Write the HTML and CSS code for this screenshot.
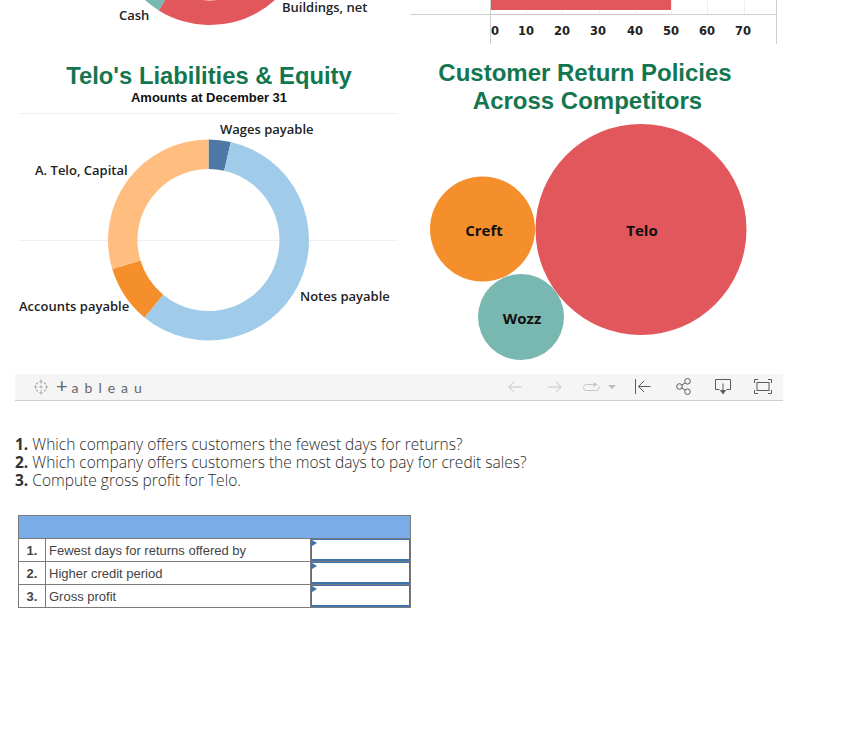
FILE: index.html
```html
<!DOCTYPE html>
<html lang="en">
<head>
<meta charset="utf-8">
<title>Telo dashboard</title>
<link rel="stylesheet" href="styles.css">
</head>
<body>
<main class="page">
  <section class="strip">
    <svg class="strip-left" viewBox="0 0 410 45" aria-label="Telo's assets donut">
      <path class="c-teal" d="M158.8 10.4A97 97 0 0 1 113 -72L137.6 -72A72.4 72.4 0 0 0 171.8 -10.500Z"/>
      <path class="c-red" d="M307 -72A97 97 0 0 1 158.8 10.4L171.8 -10.500A72.4 72.4 0 0 0 282.4 -72Z"/>
      <text class="label" x="119" y="20">Cash</text>
      <text class="label" x="282" y="12">Buildings, net</text>
    </svg>
    <svg class="strip-right" viewBox="410 0 452 45" aria-label="Bar chart axis">
      <g class="grid-faint">
        <path d="M526.5 0V14M562.5 0V14M599.5 0V14M635.5 0V14M671.5 0V14M707.5 0V14M744.5 0V14"/>
      </g>
      <rect class="c-red" x="491" y="0" width="180" height="10"/>
      <path class="axis" d="M410 14.5H777M490.5 0V44M776.5 0V44"/>
      <g class="tick">
        <text x="495" y="35">0</text>
        <text x="526" y="35">10</text>
        <text x="562" y="35">20</text>
        <text x="598" y="35">30</text>
        <text x="635" y="35">40</text>
        <text x="671" y="35">50</text>
        <text x="707" y="35">60</text>
        <text x="743" y="35">70</text>
      </g>
    </svg>
  </section>

  <section class="charts">
    <div class="panel panel-left">
      <h2 class="title">Telo's Liabilities &amp; Equity</h2>
      <p class="subtitle">Amounts at December 31</p>
      <svg class="donut" viewBox="0 113 418 261" aria-label="Liabilities and equity donut">
        <path class="rule" d="M19 113.5H398M19 240.5H398"/>
        <path class="c-blue" d="M208.5 139.5A100.5 100.5 0 0 1 230.8 142L224.2 170.8A71 71 0 0 0 208.5 169Z"/>
        <path class="c-lblue" d="M230.8 142A100.5 100.5 0 1 1 144.4 317.4L163.2 294.7A71 71 0 1 0 224.2 170.8Z"/>
        <path class="c-orange" d="M144.4 317.4A100.5 100.5 0 0 1 112.3 269L140.5 260.5A71 71 0 0 0 163.2 294.7Z"/>
        <path class="c-lorange" d="M112.3 269A100.5 100.5 0 0 1 208.5 139.5L208.5 169A71 71 0 0 0 140.5 260.5Z"/>
        <text class="label" x="220" y="134">Wages payable</text>
        <text class="label" x="35" y="175">A. Telo, Capital</text>
        <text class="label" x="19" y="311">Accounts payable</text>
        <text class="label" x="300" y="301">Notes payable</text>
      </svg>
    </div>
    <div class="panel panel-right">
      <h2 class="title title-tall">Customer Return Policies<br><span class="title-second">Across Competitors</span></h2>
      <svg class="bubbles" viewBox="418 115 344 259" aria-label="Return policies bubble chart">
        <circle class="c-red" cx="641" cy="229.5" r="105.5"/>
        <circle class="c-orange" cx="482.5" cy="229" r="52.5"/>
        <circle class="c-teal" cx="521" cy="317" r="43"/>
        <text class="bubble-label" x="484" y="235.500">Creft</text>
        <text class="bubble-label" x="642" y="235.500">Telo</text>
        <text class="bubble-label" x="522" y="323.500">Wozz</text>
      </svg>
    </div>
  </section>

  <div class="toolbar">
    <div class="brand">
      <svg class="brand-mark" viewBox="0 0 16 16" aria-hidden="true">
        <path d="M8 0V5M6.200 2.500H9.800M8 11V16M6.200 13.500H9.800M2.500 6V10M.8 8H4.200M13.500 6V10M11.800 8H15.200M4 3.500V5.500M3 4.500H5M12 3.500V5.500M11 4.500H13M4 10.500V12.500M3 11.500H5M12 10.500V12.500M11 11.500H13M8 6.200V9.800M6.200 8H9.800"/>
      </svg>
      <span class="wordmark"><span class="wordmark-plus">+</span>ableau</span>
    </div>
    <div class="tools">
      <span class="tool"><svg class="ico ico-off" width="14" height="12" viewBox="0 0 14 12"><path d="M13.500 6H1M6 .800L.8 6L6 11.200"/></svg></span>
      <span class="tool"><svg class="ico ico-off" width="14" height="12" viewBox="0 0 14 12"><path d="M.5 6H13M8 .800L13.200 6L8 11.200"/></svg></span>
      <span class="tool tool-wide">
        <svg class="ico ico-off redo" width="17" height="9" viewBox="0 0 17 9"><path d="M10 2.500H3.500A2.500 2.500 0 0 0 3.500 8.500H13.500A2.500 2.500 0 0 0 16 6V4.500"/><path class="solid" d="M10.500 0V5L14.500 2.500Z"/></svg>
        <span class="caret"></span>
      </span>
      <span class="tool"><svg class="ico" width="16" height="15" viewBox="0 0 16 15"><path d="M.5 0V15M15.500 7.500H3.500M9 2L3.500 7.500L9 13"/></svg></span>
      <span class="tool"><svg class="ico" width="15" height="17" viewBox="0 0 15 17"><circle cx="3.500" cy="8.500" r="2.800"/><circle cx="11.500" cy="3.300" r="2.800"/><circle cx="11.500" cy="13.700" r="2.800"/><path d="M5.900 7L9.100 4.900M5.900 10L9.100 12.100"/></svg></span>
      <span class="tool"><svg class="ico" width="16" height="16" viewBox="0 0 16 16"><path d="M4.500 10.500H.5V.5H15.500V10.500H11.500M8 4.500V12"/><path class="solid" d="M4.800 11H11.200L8 15.500Z"/></svg></span>
      <span class="tool"><svg class="ico" width="18" height="15" viewBox="0 0 18 15"><path d="M.5 4V.5H4M14 .5H17.500V4M.5 11V14.500H4M14 14.500H17.500V11"/><rect x="3" y="3.500" width="12" height="8"/></svg></span>
    </div>
  </div>

  <ol class="questions">
    <li><b>1.</b> Which company offers customers the fewest days for returns?</li>
    <li><b>2.</b> Which company offers customers the most days to pay for credit sales?</li>
    <li><b>3.</b> Compute gross profit for Telo.</li>
  </ol>

  <table class="answers">
    <colgroup>
      <col class="col-num">
      <col class="col-desc">
      <col class="col-entry">
    </colgroup>
    <thead>
      <tr><th colspan="3"></th></tr>
    </thead>
    <tbody>
      <tr><td class="num">1.</td><td class="desc">Fewest days for returns offered by</td><td class="entry"><div class="field"></div></td></tr>
      <tr><td class="num">2.</td><td class="desc">Higher credit period</td><td class="entry"><div class="field"></div></td></tr>
      <tr><td class="num">3.</td><td class="desc">Gross profit</td><td class="entry"><div class="field"></div></td></tr>
    </tbody>
  </table>
</main>
</body>
</html>
```
FILE: styles.css
```css
* { box-sizing: border-box; }
html, body { margin: 0; padding: 0; background: #fff; }
.page { width: 862px; height: 736px; overflow: hidden; font-family: "Liberation Sans", Arial, sans-serif; }
svg { display: block; }

.strip { display: flex; height: 45px; }
.strip-left { width: 410px; height: 45px; }
.strip-right { width: 452px; height: 45px; }

.c-red { fill: #e2575b; }
.c-teal { fill: #79b7b1; }
.c-orange { fill: #f48f2c; }
.c-lorange { fill: #ffbd7f; }
.c-blue { fill: #4e79a7; }
.c-lblue { fill: #a0cbe9; }

.label { font: 600 13px "Open Sans", "Noto Sans", sans-serif; fill: #222; }
.bubble-label { font: 700 15px "Open Sans", "Noto Sans", sans-serif; fill: #111; text-anchor: middle; }
.tick text { font: 700 11.500px "DejaVu Sans", sans-serif; fill: #222; text-anchor: middle; }
.axis { stroke: #cfcfcf; stroke-width: 1; fill: none; }
.grid-faint path { stroke: #efefef; stroke-width: 1; fill: none; }
.rule { stroke: #f0f0f0; stroke-width: 1; fill: none; }

.charts { display: grid; grid-template-columns: 418px 344px; height: 329px; }
.panel { display: flex; flex-direction: column; align-items: center; }
.title { margin: 0; font: 700 23.800px/28px "Liberation Sans", Arial, sans-serif; color: #14764f; text-align: center; }
.panel-left .title { margin-top: 17px; }
.panel-right .title { margin-top: 14px; width: 334px; align-self: flex-start; font-size: 24px; }
.title-second { padding-left: 5px; }
.subtitle { margin: 1px 0 8px; font: 700 13px/14px "Liberation Sans", Arial, sans-serif; color: #111; }
.donut { width: 418px; height: 261px; }
.bubbles { width: 344px; height: 259px; }

.toolbar { display: flex; justify-content: space-between; align-items: flex-start; width: 768px; height: 27px; margin-left: 15px; background: #f5f5f5; border-bottom: 1px solid #cfcfcf; }
.brand { display: flex; align-items: center; gap: 7px; height: 25px; padding-left: 18px; }
.brand-mark { width: 16px; height: 16px; }
.brand-mark path { stroke: #a5a5a5; stroke-width: .8; fill: none; }
.wordmark { font: 400 14px/16px "Lato", sans-serif; letter-spacing: 6px; color: #666; }
.wordmark-plus { font-size: 20px; margin-right: 0; letter-spacing: 4px; }
.tools { display: flex; }
.tool { display: flex; justify-content: center; align-items: center; width: 40px; height: 25px; }
.tool-wide { width: 48px; gap: 8px; }
.ico { fill: none; stroke: #5b5b5b; stroke-width: 1; }
.ico-off { stroke: #c4c4c4; }
.ico .solid { fill: #5b5b5b; stroke: none; }
.ico-off .solid { fill: #c4c4c4; }
.caret { width: 0; height: 0; border-left: 4px solid transparent; border-right: 4px solid transparent; border-top: 4px solid #bbb; }

.questions { list-style: none; margin: 34px 0 26px 15px; padding: 0; font: 300 15.500px/18px "Open Sans", sans-serif; color: #2a2a2a; }
.questions b { color: #333; font-weight: 700; }

.answers { border-collapse: collapse; table-layout: fixed; width: 392px; margin: 0 0 0 18px; font: 400 12px/16px "Liberation Sans", Arial, sans-serif; color: #444; }
.col-num { width: 27px; }
.col-desc { width: 265px; }
.col-entry { width: 100px; }
.answers th { height: 23px; padding: 0; background: #7aade8; border: 1px solid #7a7a7a; }
.answers td { height: 23px; padding: 2px 3px 0; border: 1px solid #7a7a7a; }
.answers .num { text-align: center; font-weight: 700; font-size: 13px; }
.answers .desc { font-size: 13px; }
.answers .entry { padding: 0; }
.field { position: relative; height: 22px; border: 1px solid #3f73ad; border-bottom-width: 2px; background: #fff; }
.field::before { content: ""; position: absolute; left: 0; top: 0; border-left: 5px solid #3f73ad; border-top: 3px solid transparent; border-bottom: 3px solid transparent; }
```
